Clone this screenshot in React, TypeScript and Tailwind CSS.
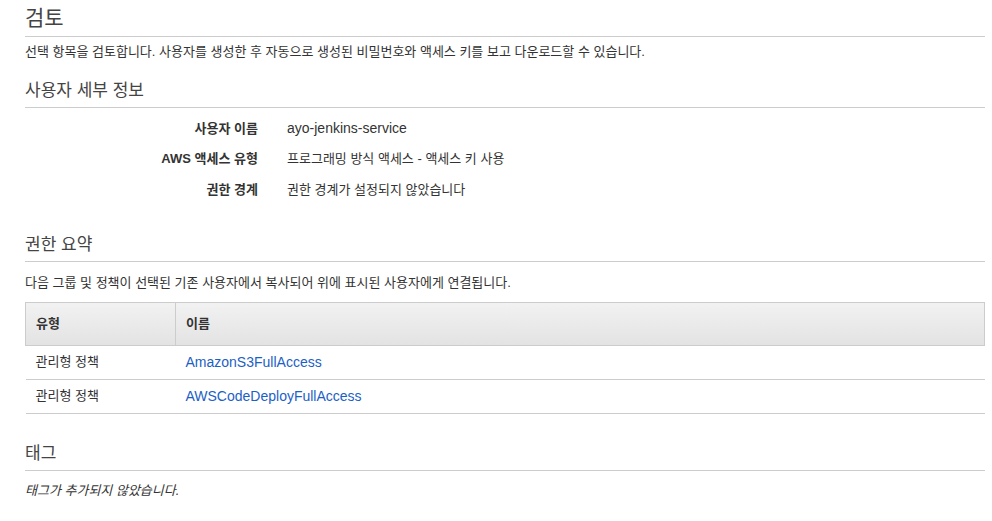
const font = { fontFamily: '"Liberation Sans", "Noto Sans CJK KR", sans-serif' }

const details = [
  { label: '사용자 이름', value: 'ayo-jenkins-service', latin: true },
  { label: 'AWS 액세스 유형', value: '프로그래밍 방식 액세스 - 액세스 키 사용', latin: false },
  { label: '권한 경계', value: '권한 경계가 설정되지 않았습니다', latin: false },
]

const policies = [
  { type: '관리형 정책', name: 'AmazonS3FullAccess' },
  { type: '관리형 정책', name: 'AWSCodeDeployFullAccess' },
]

const SectionTitle = ({ children, className = '' }: { children: React.ReactNode; className?: string }) => (
  <h3
    className={`border-b border-[#cccccc] pb-[4px] text-[17px] leading-[24px] font-normal text-[#444444] ${className}`}
  >
    {children}
  </h3>
)

export default function App() {
  return (
    <div className="min-h-[521px] bg-white pr-[7px] pl-[25px] text-[13px] text-[#333333]" style={font}>
      <h1 className="border-b border-[#cccccc] pt-[3px] pb-[4px] text-[21px] leading-[29px] font-normal text-[#444444]">
        검토
      </h1>
      <p className="mt-[6px] leading-[18px]">
        선택 항목을 검토합니다. 사용자를 생성한 후 자동으로 생성된 비밀번호와 액세스 키를 보고 다운로드할 수 있습니다.
      </p>

      <SectionTitle className="mt-[18px]">사용자 세부 정보</SectionTitle>
      <div className="mt-[5px] flex flex-col">
        {details.map((d) => (
          <div className="flex h-[30.5px] items-center" key={d.label}>
            <div className="w-[233px] text-right font-bold text-[#333333]">{d.label}</div>
            <div className={`pl-[29px] ${d.latin ? 'text-[14px]' : ''}`}>{d.value}</div>
          </div>
        ))}
      </div>

      <SectionTitle className="mt-[28px]">권한 요약</SectionTitle>
      <p className="mt-[12px] leading-[18px]">
        다음 그룹 및 정책이 선택된 기존 사용자에서 복사되어 위에 표시된 사용자에게 연결됩니다.
      </p>
      <table className="mt-[10px] w-full border-collapse">
        <thead>
          <tr className="h-[43px] bg-gradient-to-b from-[#f2f2f2] to-[#e3e3e3] text-left">
            <th className="w-[150px] border border-[#cccccc] pl-[10px] font-bold">유형</th>
            <th className="border border-[#cccccc] pl-[10px] font-bold">이름</th>
          </tr>
        </thead>
        <tbody>
          {policies.map((p) => (
            <tr className="h-[34px] border-b border-[#cccccc]" key={p.name}>
              <td className="pl-[10px]">{p.type}</td>
              <td className="pl-[10px]">
                <a className="text-[14px] text-[#1c5fc5]" href="#">
                  {p.name}
                </a>
              </td>
            </tr>
          ))}
        </tbody>
      </table>

      <SectionTitle className="mt-[28px]">태그</SectionTitle>
      <p className="mt-[11px] leading-[18px] italic">태그가 추가되지 않았습니다.</p>
    </div>
  )
}
